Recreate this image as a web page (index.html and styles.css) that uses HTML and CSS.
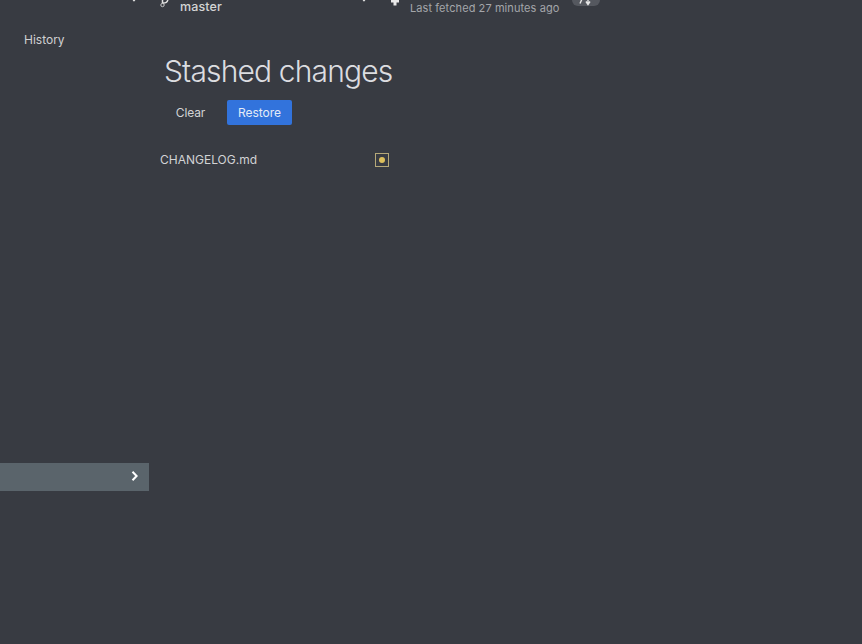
FILE: index.html
```html
<!DOCTYPE html>
<html lang="en">
<head>
  <meta charset="UTF-8" />
  <meta name="viewport" content="width=device-width, initial-scale=1.0" />
  <title>Stashed changes</title>
  <link rel="stylesheet" href="styles.css">
</head>
<body>
  <div class="app">
    <!-- Toolbar, scrolled mostly out of view -->
    <header class="toolbar">
      <svg class="tool-chevron" width="10" height="4" viewBox="0 0 10 4"><path d="M2 -3 L5 0.6 L8 -3" fill="none" stroke="#e6e6e6" stroke-width="1.4"/></svg>
      <svg class="branch-icon" width="12" height="8" viewBox="0 0 12 8"><circle cx="2.5" cy="5" r="1.7" fill="none" stroke="#c8c8c8" stroke-width="1"/><path d="M2.5 3.3 V-2 M2.5 3 C5 3 8 3.2 8 -2" fill="none" stroke="#e0e0e0" stroke-width="1.5"/></svg>
      <div class="branch-name">master</div>
      <svg class="tool-chevron-right" width="10" height="4" viewBox="0 0 10 4"><path d="M2 -3 L5 0.6 L8 -3" fill="none" stroke="#e6e6e6" stroke-width="1.4"/></svg>
      <svg class="plus-icon" width="10" height="7" viewBox="0 0 10 7"><path d="M5 -4 V5.5 M1 1 H9" fill="none" stroke="#e8e8e8" stroke-width="3"/></svg>
      <div class="fetched">Last fetched 27 minutes ago</div>
      <div class="pill">
        <svg width="16" height="6" viewBox="0 0 16 6"><path d="M2 3.5 L4 -1 M10 -1 V4 M8 1.5 L10 4.5 L12 1.5" fill="none" stroke="#e6e6e6" stroke-width="1.4"/></svg>
      </div>
    </header>

    <div class="content">
      <aside class="sidebar">
        <div class="nav-item">History</div>
        <div class="collapse-bar">
          <svg width="8" height="10" viewBox="0 0 8 10"><path d="M1.5 0.8 L5.6 5 L1.5 9.2" fill="none" stroke="#ffffff" stroke-width="2"/></svg>
        </div>
      </aside>

      <main class="stash">
        <h1 class="stash-title">Stashed changes</h1>
        <div class="stash-actions">
          <button class="btn-clear">Clear</button>
          <button class="btn-restore">Restore</button>
        </div>
        <div class="file-row">
          <span class="file-name">CHANGELOG.md</span>
          <span class="status-modified"><span class="status-dot"></span></span>
        </div>
      </main>
    </div>
  </div>
</body>
</html>
```

FILE: styles.css
```css
html, body {
  margin: 0;
  padding: 0;
  overflow: hidden;
  height: 100%;
}
body {
  font-family: Inter, "Noto Sans", sans-serif;
  background-color: #383b42;
  color: #dcdcdc;
}
.app {
  height: 644px;
  display: flex;
  flex-direction: column;
}

.toolbar {
  height: 16px;
  flex-shrink: 0;
  display: flex;
  align-items: flex-start;
  overflow: hidden;
}
.tool-chevron {
  margin-left: 129px;
  flex-shrink: 0;
}
.branch-icon {
  margin-left: 21px;
  flex-shrink: 0;
}
.branch-name {
  margin-left: 8px;
  margin-top: -1px;
  width: 170px;
  font-size: 12.5px;
  line-height: 16px;
  font-weight: 500;
  letter-spacing: 0.1px;
  color: #d4d4d4;
}
.tool-chevron-right {
  margin-left: 9px;
  flex-shrink: 0;
}
.plus-icon {
  margin-left: 21px;
  flex-shrink: 0;
}
.fetched {
  margin-left: 10px;
  font-size: 11px;
  line-height: 16px;
  letter-spacing: 0.08px;
  color: #a4a6aa;
  width: 162px;
  flex-shrink: 0;
}
.pill {
  width: 28px;
  height: 6px;
  background-color: #55585f;
  border-radius: 0 0 6px 6px;
  display: flex;
  justify-content: center;
  flex-shrink: 0;
}

.content {
  flex: 1;
  display: flex;
  min-height: 0;
}
.sidebar {
  width: 149px;
  flex-shrink: 0;
  display: flex;
  flex-direction: column;
  padding-bottom: 153px;
  box-sizing: border-box;
}
.nav-item {
  padding: 16px 0 0 24px;
  font-size: 12px;
  line-height: 16px;
  color: #d0d0d2;
}
.collapse-bar {
  margin-top: auto;
  height: 28px;
  background-color: #5a646b;
  display: flex;
  align-items: center;
  justify-content: flex-end;
  padding-right: 10px;
  padding-bottom: 2px;
  box-sizing: border-box;
}

.stash {
  flex: 1;
  padding-left: 11px;
}
.stash-title {
  margin: 33px 0 0 4px;
  font-size: 30px;
  line-height: 44px;
  font-weight: 300;
  letter-spacing: -0.85px;
  color: #dcdde0;
}
.stash-actions {
  display: flex;
  margin-top: 7px;
  gap: 11px;
}
.stash-actions button {
  font-family: inherit;
  font-size: 12px;
  height: 25px;
  border: none;
  border-radius: 2px;
  padding: 0;
}
.btn-clear {
  width: 51px;
  margin-left: 5px;
  background: none;
  letter-spacing: -0.1px;
  color: #d2d3d5;
}
.btn-restore {
  width: 65px;
  background-color: #3273dc;
  color: #e4ebf7;
}
.file-row {
  display: flex;
  align-items: center;
  justify-content: space-between;
  width: 229px;
  margin-top: 26px;
  height: 18px;
}
.file-name {
  font-size: 12px;
  margin-bottom: 2px;
  color: #d2d3d5;
}
.status-modified {
  width: 12px;
  height: 12px;
  border: 1px solid #b5a878;
  display: flex;
  align-items: center;
  justify-content: center;
}
.status-dot {
  width: 6px;
  height: 6px;
  border-radius: 50%;
  background-color: #dcbf5c;
}
```
